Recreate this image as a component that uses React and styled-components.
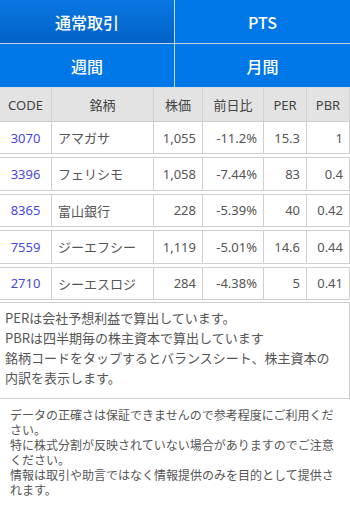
import React, { useState } from 'react';
import styled, { createGlobalStyle } from 'styled-components';

const GlobalStyle = createGlobalStyle`
  body {
    margin: 0;
    background: #fff;
    font-family: "Noto Sans", "Noto Sans CJK JP", sans-serif;
    color: #555;
  }
`;

const Page = styled.div`
  width: 350px;
  background: #fff;
`;

// 上のタブボタン
const TabGrid = styled.div`
  display: grid;
  grid-template-columns: 174px 175px;
  grid-auto-rows: 43px;
  gap: 1px;
  background: #c9d3de;
  border-bottom: 1px solid #d8dde3;
  padding-right: 1px;
`;

const TabButton = styled.div`
  display: flex;
  align-items: center;
  justify-content: center;
  color: #fff;
  font-size: 16px;
  font-weight: 500;
  font-family: "Noto Sans CJK JP", sans-serif;
  background: ${p => (p.$active ? 'linear-gradient(#0a78e2, #0062c6)' : '#0077e6')};
  cursor: pointer;
`;

// ランキング表
const Table = styled.div`
  font-size: 13px;
  color: #555;
`;

const Row = styled.div`
  display: grid;
  grid-template-columns: 52px 102px 49px 61px 43px 43px;
  height: ${p => (p.$head ? '33px' : p.$gap ? '31.5px' : '31px')};
  background: ${p => (p.$head ? '#e3e3e3' : '#fff')};
  border-bottom: 1px solid #cfcfcf;
  border-top: ${p => (p.$gap ? '1px solid #cfcfcf' : 'none')};
  margin-top: ${p => (p.$gap ? '3px' : '0')};
`;

const Cell = styled.div`
  display: flex;
  align-items: center;
  justify-content: ${p => p.$align || 'flex-end'};
  padding: ${p => (p.$align === 'flex-start' ? '0 0 0 6px' : p.$align === 'center' ? '0' : '0 6px 0 0')};
  border-right: 1px solid ${p => (p.$head ? '#d2d2d2' : '#cfcfcf')};
  white-space: nowrap;
  color: ${p => (p.$link ? '#4747df' : '#555')};
  cursor: ${p => (p.$link ? 'pointer' : 'default')};
`;

const HeadCell = styled(Cell)`
  justify-content: center;
  padding: 0;
  color: #444;
`;

const Notes = styled.div`
  margin-top: 2px;
  border: 1px solid #cfcfcf;
  border-left: none;
  padding: 5px 10px 10px 5px;
  font-size: 13px;
  line-height: 20px;
  color: #555;
  font-family: "Noto Sans CJK JP", sans-serif;
`;

const Disclaimer = styled.div`
  padding: 8px 10px 10px 10px;
  font-size: 12px;
  line-height: 15px;
  color: #555;
  font-family: "Noto Sans CJK JP", sans-serif;
`;

const stocks = [
  { code: '3070', name: 'アマガサ', price: '1,055', diff: '-11.2%', per: '15.3', pbr: '1' },
  { code: '3396', name: 'フェリシモ', price: '1,058', diff: '-7.44%', per: '83', pbr: '0.4' },
  { code: '8365', name: '富山銀行', price: '228', diff: '-5.39%', per: '40', pbr: '0.42' },
  { code: '7559', name: 'ジーエフシー', price: '1,119', diff: '-5.01%', per: '14.6', pbr: '0.44' },
  { code: '2710', name: 'シーエスロジ', price: '284', diff: '-4.38%', per: '5', pbr: '0.41' },
];

const tabs = ['通常取引', 'PTS', '週間', '月間'];

function App() {
  const [tab, setTab] = useState(0);

  return (
    <Page>
      <GlobalStyle />
      <TabGrid>
        {tabs.map((t, i) => (
          <TabButton key={t} $active={i === tab} onClick={() => setTab(i)}>
            {t}
          </TabButton>
        ))}
      </TabGrid>
      <Table>
        <Row $head>
          <HeadCell $head>CODE</HeadCell>
          <HeadCell $head>銘柄</HeadCell>
          <HeadCell $head>株価</HeadCell>
          <HeadCell $head>前日比</HeadCell>
          <HeadCell $head>PER</HeadCell>
          <HeadCell $head>PBR</HeadCell>
        </Row>
        {stocks.map((s, i) => (
          <Row key={s.code} $gap={i > 0}>
            <Cell $align="center" $link>{s.code}</Cell>
            <Cell $align="flex-start">{s.name}</Cell>
            <Cell>{s.price}</Cell>
            <Cell>{s.diff}</Cell>
            <Cell>{s.per}</Cell>
            <Cell>{s.pbr}</Cell>
          </Row>
        ))}
      </Table>
      <Notes>
        <div>PERは会社予想利益で算出しています。</div>
        <div>PBRは四半期毎の株主資本で算出しています</div>
        <div>銘柄コードをタップするとバランスシート、株主資本の内訳を表示します。</div>
      </Notes>
      <Disclaimer>
        <div>データの正確さは保証できませんので参考程度にご利用ください。</div>
        <div>特に株式分割が反映されていない場合がありますのでご注意ください。</div>
        <div>情報は取引や助言ではなく情報提供のみを目的として提供されます。</div>
      </Disclaimer>
    </Page>
  );
}

export default App;
